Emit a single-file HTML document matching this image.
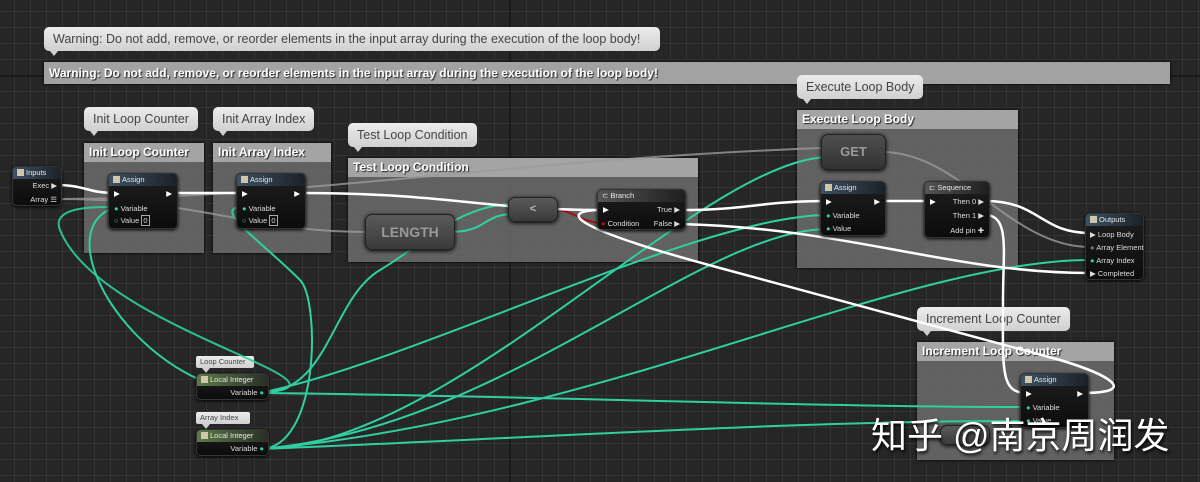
<!DOCTYPE html>
<html><head><meta charset="utf-8"><style>
*{margin:0;padding:0;box-sizing:border-box}
body{width:1200px;height:482px;overflow:hidden;background:#262626;font-family:"Liberation Sans",sans-serif;position:relative}
.grid{position:absolute;inset:0;background-image:linear-gradient(#1a1a1a,#1a1a1a),linear-gradient(90deg,#1a1a1a,#1a1a1a),linear-gradient(#333 1px,transparent 1px),linear-gradient(90deg,#333 1px,transparent 1px);background-size:1200px 2px,2px 482px,16px 16px,16px 16px;background-position:0 75px,509px 0,0 11px,14px 0;background-repeat:no-repeat,no-repeat,repeat,repeat}
.bub{position:absolute;background:linear-gradient(#ececec,#d0d0d0);border-radius:5px;color:#444;font-size:12.5px;padding:0 9px;line-height:24px;white-space:nowrap}
.bub:after{content:"";position:absolute;left:6px;bottom:-5px;border:4px solid transparent;border-top:5px solid #d0d0d0;border-bottom:0}
.cm{position:absolute;background:rgba(112,112,112,.8);box-shadow:0 0 3px #000}
.cm .h{background:#a4a4a4;height:19px;color:#fff;font-weight:bold;font-size:12px;line-height:19px;padding-left:5px;text-shadow:1px 1px 1px #222;white-space:nowrap;overflow:hidden}
.nd{position:absolute;background:linear-gradient(#1e1e1e,#0c0c0c);border-radius:5px;box-shadow:0 1px 3px #000;color:#ddd;font-size:7.5px;border:1px solid #333}
.nd .t{height:12px;border-radius:4px 4px 0 0;background:linear-gradient(90deg,#3c5266,#1c2026);color:#e8e8e8;font-size:7.5px;line-height:12px;padding-left:4px;white-space:nowrap}
.ic{display:inline-block;width:7px;height:7px;background:#cfc7a8;margin-right:2px;vertical-align:-1px}
.r{position:absolute;white-space:nowrap}
.big{position:absolute;background:linear-gradient(#5a5a5a,#3a3a3a);border-radius:7px;border:1px solid #222;box-shadow:0 1px 4px #000;color:#999;font-weight:bold;text-align:center}
svg{position:absolute;left:0;top:0}
</style></head><body>
<div class="grid"></div>

<div class="bub" style="left:44px;top:27px;width:616px">Warning: Do not add, remove, or reorder elements in the input array during the execution of the loop body!</div>
<div class="cm" style="left:44px;top:62px;width:1126px;height:22px;background:#9a9a9a"><div class="h" style="height:22px;line-height:22px;background:#a2a2a2">Warning: Do not add, remove, or reorder elements in the input array during the execution of the loop body!</div></div>

<div class="bub" style="left:84px;top:107px">Init Loop Counter</div>
<div class="cm" style="left:84px;top:143px;width:120px;height:110px"><div class="h">Init Loop Counter</div></div>
<div class="bub" style="left:213px;top:107px">Init Array Index</div>
<div class="cm" style="left:213px;top:143px;width:118px;height:110px"><div class="h">Init Array Index</div></div>
<div class="bub" style="left:348px;top:123px">Test Loop Condition</div>
<div class="cm" style="left:348px;top:158px;width:350px;height:104px"><div class="h">Test Loop Condition</div></div>
<div class="bub" style="left:797px;top:75px">Execute Loop Body</div>
<div class="cm" style="left:797px;top:110px;width:221px;height:158px"><div class="h">Execute Loop Body</div></div>
<div class="bub" style="left:917px;top:307px">Increment Loop Counter</div>
<div class="cm" style="left:917px;top:342px;width:197px;height:118px"><div class="h">Increment Loop Counter</div></div>

<div class="bub" style="left:196px;top:356px;font-size:7.5px;line-height:12px;padding:0 4px;width:58px;border-radius:2px">Loop Counter</div>
<div class="bub" style="left:196px;top:412px;font-size:7.5px;line-height:12px;padding:0 4px;width:54px;border-radius:2px">Array Index</div>

<svg width="1200" height="482" fill="none" stroke-linecap="round">
<g stroke="#9a9a9a" stroke-width="2" opacity=".8">
<path d="M58,199 C200,199 250,232 367,232"/>
<path d="M58,199 C300,199 500,160 821,148"/>
<path d="M882,152 C960,152 1010,247 1090,247"/>
</g>
<g stroke="#2fcf9f" stroke-width="2">
<path d="M448,232 C490,232 480,214 516,214"/>
<path d="M260,393 C140,393 40,230 116,207"/>
<path d="M260,449 C320,449 320,300 300,280 C260,240 210,207 243,207"/>
<path d="M260,393 C330,393 330,300 380,270 C430,240 460,204 516,204"/>
<path d="M260,449 C450,449 700,160 828,157"/>
<path d="M260,449 C500,430 700,229 828,229"/>
<path d="M260,393 C420,360 700,215 828,215"/>
<path d="M260,449 C600,420 900,260 1090,260"/>
<path d="M260,393 C500,395 800,407 1027,407"/>
<path d="M260,449 C500,440 800,420 1027,421"/>
<path d="M260,393 C380,385 100,330 60,230 C50,205 100,207 116,207" opacity=".9"/>
</g>
<path d="M554,210 C575,210 580,223 604,223" stroke="#a01010" stroke-width="2"/>
<g stroke="#fff" stroke-width="2.5">
<path d="M56,185 C86,185 86,193 116,193"/>
<path d="M170,193 C200,193 213,193 243,193"/>
<path d="M298,193 C450,193 480,210 603,210"/>
<path d="M680,210 C750,210 760,201 828,201"/>
<path d="M880,201 C900,201 910,201 930,201"/>
<path d="M985,201 C1040,201 1040,233 1090,233"/>
<path d="M985,215 C1010,215 1003,250 1003,300 C1003,370 1000,393 1027,393"/>
<path d="M1082,393 C1140,393 1110,375 1060,360 L720,268 C560,225 560,210 603,210"/>
<path d="M680,224 C850,228 950,273 1090,273"/>
</g>
</svg>

<div class="nd" style="left:12px;top:166px;width:50px;height:40px"><div class="t"><span class="ic"></span>Inputs</div>
<div class="r" style="right:4px;top:14px">Exec ▶</div><div class="r" style="right:4px;top:28px">Array ☰</div></div>
<div class="nd" style="left:108px;top:173px;width:70px;height:56px"><div class="t"><span class="ic"></span>Assign</div>
<div class="r" style="left:5px;top:15px;color:#fff">▶</div><div class="r" style="right:5px;top:15px;color:#fff">▶</div>
<div class="r" style="left:5px;top:30px"><span style="color:#2fcf9f">●</span> Variable</div><div class="r" style="left:5px;top:42px"><span style="color:#2fcf9f">○</span> Value <span style="border:1px solid #aaa;padding:0 1px">0</span></div></div>
<div class="nd" style="left:236px;top:173px;width:70px;height:56px"><div class="t"><span class="ic"></span>Assign</div>
<div class="r" style="left:5px;top:15px;color:#fff">▶</div><div class="r" style="right:5px;top:15px;color:#fff">▶</div>
<div class="r" style="left:5px;top:30px"><span style="color:#2fcf9f">●</span> Variable</div><div class="r" style="left:5px;top:42px"><span style="color:#2fcf9f">○</span> Value <span style="border:1px solid #aaa;padding:0 1px">0</span></div></div>
<div class="big" style="left:365px;top:214px;width:90px;height:36px;font-size:14px;line-height:34px">LENGTH</div>
<div class="big" style="left:821px;top:134px;width:65px;height:36px;font-size:13px;line-height:34px;background:linear-gradient(#4e4e4e,#333)">GET</div>
<div class="big" style="left:508px;top:197px;width:50px;height:25px;font-size:11px;line-height:23px;color:#bbb">&lt;</div>
<div class="nd" style="left:597px;top:189px;width:89px;height:41px"><div class="t" style="background:linear-gradient(90deg,#555,#1e1e1e)">⊂ Branch</div>
<div class="r" style="left:5px;top:15px;color:#fff">▶</div><div class="r" style="right:5px;top:15px">True ▶</div>
<div class="r" style="left:3px;top:29px"><span style="color:#b01010">●</span> Condition</div><div class="r" style="right:5px;top:29px">False ▶</div></div>
<div class="nd" style="left:820px;top:181px;width:66px;height:55px"><div class="t"><span class="ic"></span>Assign</div>
<div class="r" style="left:5px;top:15px;color:#fff">▶</div><div class="r" style="right:5px;top:15px;color:#fff">▶</div>
<div class="r" style="left:5px;top:29px"><span style="color:#2fcf9f">●</span> Variable</div><div class="r" style="left:5px;top:42px"><span style="color:#2fcf9f">●</span> Value</div></div>
<div class="nd" style="left:924px;top:181px;width:66px;height:57px"><div class="t" style="background:linear-gradient(90deg,#555,#1e1e1e)">⊏ Sequence</div>
<div class="r" style="left:5px;top:15px;color:#fff">▶</div><div class="r" style="right:5px;top:15px">Then 0 ▶</div>
<div class="r" style="right:5px;top:29px">Then 1 ▶</div><div class="r" style="right:5px;top:44px">Add pin ✚</div></div>
<div class="nd" style="left:1085px;top:213px;width:59px;height:67px"><div class="t"><span class="ic"></span>Outputs</div>
<div class="r" style="left:4px;top:16px">▶ Loop Body</div><div class="r" style="left:4px;top:29px"><span style="color:#777">●</span> Array Element</div>
<div class="r" style="left:4px;top:42px"><span style="color:#2fcf9f">●</span> Array Index</div><div class="r" style="left:4px;top:55px">▶ Completed</div></div>
<div class="big" style="left:940px;top:425px;width:50px;height:20px;font-size:9px;line-height:18px">0</div>
<div class="nd" style="left:1020px;top:373px;width:69px;height:55px"><div class="t"><span class="ic"></span>Assign</div>
<div class="r" style="left:5px;top:15px;color:#fff">▶</div><div class="r" style="right:5px;top:15px;color:#fff">▶</div>
<div class="r" style="left:5px;top:29px"><span style="color:#2fcf9f">●</span> Variable</div><div class="r" style="left:5px;top:42px"><span style="color:#2fcf9f">●</span> Value</div></div>
<div class="nd" style="left:196px;top:373px;width:73px;height:27px"><div class="t" style="background:linear-gradient(90deg,#5b7a48,#2a2f26)"><span class="ic"></span>Local Integer</div>
<div class="r" style="right:4px;top:14px">Variable <span style="color:#2fcf9f">●</span></div></div>
<div class="nd" style="left:196px;top:429px;width:73px;height:27px"><div class="t" style="background:linear-gradient(90deg,#5b7a48,#2a2f26)"><span class="ic"></span>Local Integer</div>
<div class="r" style="right:4px;top:14px">Variable <span style="color:#2fcf9f">●</span></div></div>

<div style="position:absolute;left:871px;top:407px;font-size:36px;color:#fff;text-shadow:1px 2px 3px #000;white-space:nowrap;font-family:'Liberation Sans','Noto Sans CJK SC',sans-serif">知乎 @南京周润发</div>
</body></html>
